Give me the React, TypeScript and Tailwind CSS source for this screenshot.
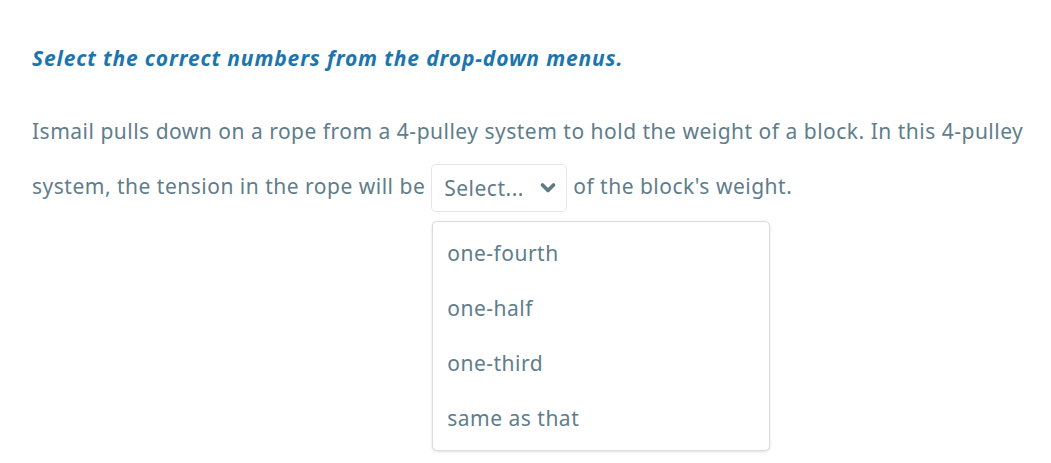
import React from "react";

const font = { fontFamily: '"Noto Sans", "Open Sans", sans-serif' };

function Chevron() {
  return (
    <svg width="16" height="12" viewBox="0 0 16 12" className="inline-block">
      <path d="M2.5 3 L8 8.5 L13.5 3" fill="none" stroke="#5f7a85" strokeWidth="3.6" strokeLinecap="round" strokeLinejoin="round" />
    </svg>
  );
}

export default function App() {
  const options = ["one-fourth", "one-half", "one-third", "same as that"];
  return (
    <div className="w-[1051px] h-[463px] bg-white overflow-hidden" style={font}>
      <div className="pl-[32px] pt-[42px] pr-[16px]">
        <h2 className="text-[21px] font-bold italic text-[#1b75ae] leading-[32px] tracking-[0.85px]">
          Select the correct numbers from the drop-down menus.
        </h2>
        <p className="mt-[30px] text-[21px] leading-[55px] text-[#607d8b] tracking-[0.5px]">
          Ismail pulls down on a rope from a 4-pulley system to hold the weight of a block. In this 4-pulley
          system, the tension in the rope will be{" "}
          <span className="relative inline-block align-middle">
            <span className="inline-flex items-center justify-between w-[136px] h-[48px] border border-[#e3e6e8] rounded-[5px] pl-[12px] pr-[10px] leading-[48px]">
              <span>Select...</span>
              <Chevron />
            </span>
            <span className="absolute left-[1px] top-[60px] w-[338px] h-[230px] bg-white border border-[#dcdcdc] rounded-[5px] shadow-[0_1px_3px_rgba(0,0,0,0.12)] pt-[4px] z-10 flex flex-col">
              {options.map((o) => (
                <span key={o} className="h-[55px] pl-[14px] flex items-center leading-[55px]">
                  {o}
                </span>
              ))}
            </span>
          </span>{" "}
          of the block's weight.
        </p>
      </div>
    </div>
  );
}
